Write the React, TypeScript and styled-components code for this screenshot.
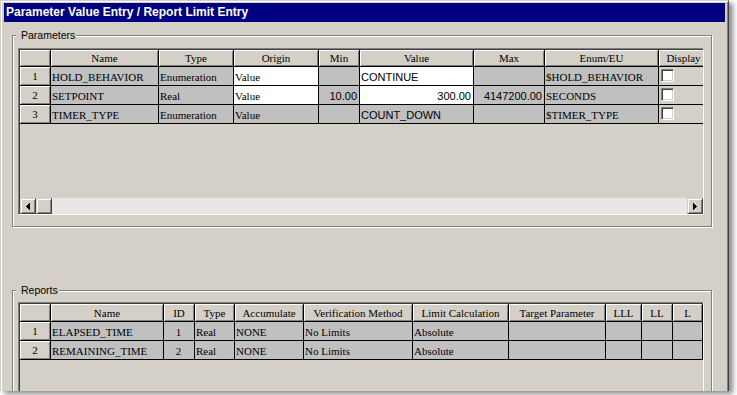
import React from 'react';
import styled, { createGlobalStyle } from 'styled-components';

const GlobalStyle = createGlobalStyle`
    html, body {
        margin: 0;
        padding: 0;
        background: #fff;
    }
    body {
        width: 737px;
        height: 395px;
        overflow: hidden;
    }
`;

const Window = styled.div`
    box-sizing: border-box;
    width: 729px;
    height: 391px;
    padding: 2px 3px 0 3px;
    border: 1px solid;
    border-color: #d4d0c8 #404040 transparent #d4d0c8;
    border-bottom: none;
    background: #d4d0c8;
    box-shadow: inset 1px 1px 0 #fff, inset -1px 0 0 #808080, 4px 3px 5px rgba(0, 0, 0, 0.45);
    display: flex;
    flex-direction: column;
    overflow: hidden;
`;

const TitleBar = styled.div`
    flex: none;
    height: 19px;
    padding-left: 2px;
    background: #000080;
    color: #fff;
    font: bold 12px/19px 'Liberation Sans', Arial, sans-serif;
    white-space: nowrap;
`;

const GroupBox = styled.div<{ $h: number; $mt: number; $pt: number }>`
    position: relative;
    flex: none;
    box-sizing: border-box;
    width: 700px;
    height: ${(p) => p.$h}px;
    margin: ${(p) => p.$mt}px 0 0 8px;
    padding: ${(p) => p.$pt}px 0 0 5px;
    border: 1px solid #808080;
    box-shadow: inset 1px 1px 0 #fff, 1px 1px 0 #fff;
`;

// sits on top of the etched border line, like a win32 group box caption
const Legend = styled.span`
    position: absolute;
    top: -7px;
    left: 3px;
    padding: 0 1px 0 5px;
    background: #d4d0c8;
    color: #000;
    font: 10.5px/13px 'Liberation Sans', Arial, sans-serif;
`;

const Grid = styled.div<{ $h: number }>`
    box-sizing: border-box;
    width: 686px;
    height: ${(p) => p.$h}px;
    border: 1px solid;
    border-color: #808080 #fff #fff #808080;
    display: flex;
    flex-direction: column;
`;

const GridInner = styled.div`
    flex: 1;
    min-height: 0;
    border-top: 1px solid #404040;
    border-left: 1px solid #404040;
    display: flex;
    flex-direction: column;
    overflow: hidden;
`;

const Row = styled.div<{ $h: number }>`
    flex: none;
    display: flex;
    height: ${(p) => p.$h}px;
`;

const HeadCell = styled.div<{ $w: number }>`
    flex: none;
    box-sizing: border-box;
    width: ${(p) => p.$w}px;
    border-right: 1px solid #000;
    border-bottom: 1px solid #000;
    background: #d4d0c8;
    box-shadow: inset 1px 1px 0 #fff, inset -1px -1px 0 #808080;
    display: flex;
    align-items: center;
    justify-content: center;
    color: #000;
    font: 11px 'Liberation Serif', 'Times New Roman', serif;
    white-space: nowrap;
    overflow: hidden;
`;

const Cell = styled.div<{ $w: number; $bg: string; $align: string; $sans?: boolean }>`
    flex: none;
    box-sizing: border-box;
    width: ${(p) => p.$w}px;
    padding: 2px 2px 0 1px;
    border-right: 1px solid #000;
    border-bottom: 1px solid #000;
    background: ${(p) => p.$bg};
    display: flex;
    align-items: center;
    justify-content: ${(p) => p.$align};
    color: #000;
    font-size: 11px;
    font-family: ${(p) =>
        p.$sans
            ? "'Liberation Sans', Arial, sans-serif"
            : "'Liberation Serif', 'Times New Roman', serif"};
    white-space: nowrap;
    overflow: hidden;
`;

const CheckCell = styled.div<{ $w: number }>`
    flex: none;
    box-sizing: border-box;
    width: ${(p) => p.$w}px;
    padding: 2px 0 0 2px;
    border-bottom: 1px solid #000;
    background: #d4d0c8;
`;

const CheckBox = styled.div`
    box-sizing: border-box;
    width: 13px;
    height: 13px;
    background: #fff;
    border: 1px solid;
    border-color: #808080 #fff #fff #808080;
    box-shadow: inset 1px 1px 0 #404040, inset -1px -1px 0 #d4d0c8;
`;

const HScroll = styled.div`
    flex: none;
    height: 16px;
    margin-top: auto;
    display: flex;
    background: #e8e7e4;
`;

const ScrollBtn = styled.div<{ $push?: boolean }>`
    flex: none;
    box-sizing: border-box;
    width: 16px;
    height: 16px;
    margin-left: ${(p) => (p.$push ? 'auto' : '0')};
    border: 1px solid;
    border-color: #d4d0c8 #404040 #404040 #d4d0c8;
    background: #d4d0c8;
    box-shadow: inset 1px 1px 0 #fff, inset -1px -1px 0 #808080;
    display: flex;
    align-items: center;
    justify-content: center;
`;

type Spec = {
    t?: string;
    bg?: 'w' | 'g';
    a?: 'r' | 'c';
    sans?: boolean;
    check?: boolean;
};

const BG = { w: '#fff', g: '#c0c0c0' };
const ALIGN = { l: 'flex-start', r: 'flex-end', c: 'center' };

const Arrow = ({ dir }: { dir: 'left' | 'right' }) => (
    <svg width="4" height="7" viewBox="0 0 4 7">
        <path
            fill="#000"
            d={
                dir === 'left'
                    ? 'M3 0h1v7h-1z M2 1h1v5h-1z M1 2h1v3h-1z M0 3h1v1h-1z'
                    : 'M0 0h1v7h-1z M1 1h1v5h-1z M2 2h1v3h-1z M3 3h1v1h-1z'
            }
        />
    </svg>
);

type GridProps = {
    cols: number[];
    heads: string[];
    rows: Spec[][];
    headH: number;
    height: number;
    scroll?: boolean;
};

const DataGrid = ({ cols, heads, rows, headH, height, scroll }: GridProps) => (
    <Grid $h={height}>
        <GridInner>
            <Row $h={headH}>
                {heads.map((h, i) => (
                    <HeadCell key={i} $w={cols[i]}>
                        {h}
                    </HeadCell>
                ))}
            </Row>
            {rows.map((r, ri) => (
                <Row key={ri} $h={19}>
                    <HeadCell $w={cols[0]}>{ri + 1}</HeadCell>
                    {r.map((c, ci) =>
                        c.check ? (
                            <CheckCell key={ci} $w={cols[ci + 1]}>
                                <CheckBox />
                            </CheckCell>
                        ) : (
                            <Cell
                                key={ci}
                                $w={cols[ci + 1]}
                                $bg={BG[c.bg || 'g']}
                                $align={ALIGN[c.a || 'l']}
                                $sans={c.sans}
                            >
                                {c.t}
                            </Cell>
                        ),
                    )}
                </Row>
            ))}
            {scroll && (
                <HScroll>
                    <ScrollBtn>
                        <Arrow dir="left" />
                    </ScrollBtn>
                    <ScrollBtn />
                    <ScrollBtn $push>
                        <Arrow dir="right" />
                    </ScrollBtn>
                </HScroll>
            )}
        </GridInner>
    </Grid>
);

const paramCols = [31, 108, 75, 85, 41, 114, 71, 114, 50];
const paramHeads = ['', 'Name', 'Type', 'Origin', 'Min', 'Value', 'Max', 'Enum/EU', 'Display'];
const paramRows: Spec[][] = [
    [
        { t: 'HOLD_BEHAVIOR' },
        { t: 'Enumeration' },
        { t: 'Value', bg: 'w' },
        {},
        { t: 'CONTINUE', bg: 'w', sans: true },
        {},
        { t: '$HOLD_BEHAVIOR' },
        { check: true },
    ],
    [
        { t: 'SETPOINT' },
        { t: 'Real' },
        { t: 'Value', bg: 'w' },
        { t: '10.00', a: 'r', sans: true },
        { t: '300.00', bg: 'w', a: 'r', sans: true },
        { t: '4147200.00', a: 'r', sans: true },
        { t: 'SECONDS' },
        { check: true },
    ],
    [
        { t: 'TIMER_TYPE' },
        { t: 'Enumeration' },
        { t: 'Value' },
        {},
        { t: 'COUNT_DOWN', sans: true },
        {},
        { t: '$TIMER_TYPE' },
        { check: true },
    ],
];

const reportCols = [31, 113, 31, 40, 69, 109, 96, 97, 36, 31, 30];
const reportHeads = [
    '',
    'Name',
    'ID',
    'Type',
    'Accumulate',
    'Verification Method',
    'Limit Calculation',
    'Target Parameter',
    'LLL',
    'LL',
    'L',
];
const reportRow = (name: string, id: string): Spec[] => [
    { t: name },
    { t: id, a: 'c' },
    { t: 'Real' },
    { t: 'NONE' },
    { t: 'No Limits' },
    { t: 'Absolute' },
    {},
    {},
    {},
    {},
];
const reportRows = [reportRow('ELAPSED_TIME', '1'), reportRow('REMAINING_TIME', '2')];

const App = (): JSX.Element => {
    return (
        <>
            <GlobalStyle />
            <Window>
                <TitleBar>Parameter Value Entry / Report Limit Entry</TitleBar>
                <GroupBox $h={192} $mt={13} $pt={12}>
                    <Legend>Parameters</Legend>
                    <DataGrid
                        cols={paramCols}
                        heads={paramHeads}
                        rows={paramRows}
                        headH={17}
                        height={167}
                        scroll
                    />
                </GroupBox>
                <GroupBox $h={140} $mt={63} $pt={11}>
                    <Legend>Reports</Legend>
                    <DataGrid
                        cols={reportCols}
                        heads={reportHeads}
                        rows={reportRows}
                        headH={18}
                        height={130}
                    />
                </GroupBox>
            </Window>
        </>
    );
};

export default App;
